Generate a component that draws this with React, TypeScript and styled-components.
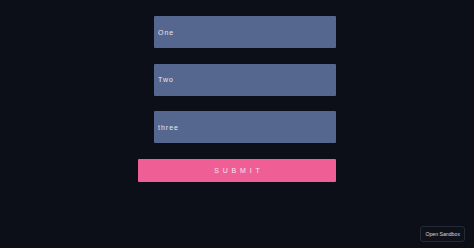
import styled, { createGlobalStyle } from 'styled-components'

const GlobalStyle = createGlobalStyle`
  html, body {
    margin: 0;
    padding: 0;
    background: #0c0e18;
    font-family: "Liberation Sans", Arial, sans-serif;
  }
`

const fields = ['One', 'Two', 'three']

export default function App() {
  return (
    <Page>
      <GlobalStyle />
      <Form>
        {fields.map((f) => (
          <Field key={f}>
            <Input defaultValue={f} />
          </Field>
        ))}
        <Submit type="button">Submit</Submit>
      </Form>
      <SandboxButton>Open Sandbox</SandboxButton>
    </Page>
  )
}

const Page = styled.div`
  position: relative;
  width: 474px;
  height: 248px;
  overflow: hidden;
`

const Form = styled.form`
  width: 198px;
  margin: 0 auto;
  padding-top: 16px;
  display: flex;
  flex-direction: column;
  align-items: flex-end;
`

const Field = styled.div`
  width: 182px;
  margin-bottom: 15.5px;
`

const Input = styled.input`
  box-sizing: border-box;
  display: block;
  width: 100%;
  height: 32px;
  padding: 0 4px;
  border: none;
  border-radius: 1px;
  background: #56678f;
  color: #e4e8f2;
  font-family: "Liberation Sans", Arial, sans-serif;
  font-size: 7px;
  letter-spacing: 1px;
  outline: none;
`

const Submit = styled.button`
  width: 198px;
  height: 23px;
  border: none;
  border-radius: 1px;
  background: #ef5e94;
  color: #fbe4ee;
  font-family: "Liberation Sans", Arial, sans-serif;
  font-size: 7px;
  letter-spacing: 3.8px;
  text-transform: uppercase;
  padding: 0 0 0 3.8px;
`

const SandboxButton = styled.div`
  position: absolute;
  right: 9px;
  bottom: 6px;
  padding: 4px 4px;
  border: 1px solid #262a36;
  border-radius: 3px;
  background: #0f111a;
  color: #d8dbe2;
  font-size: 5.2px;
  line-height: 6px;
`
